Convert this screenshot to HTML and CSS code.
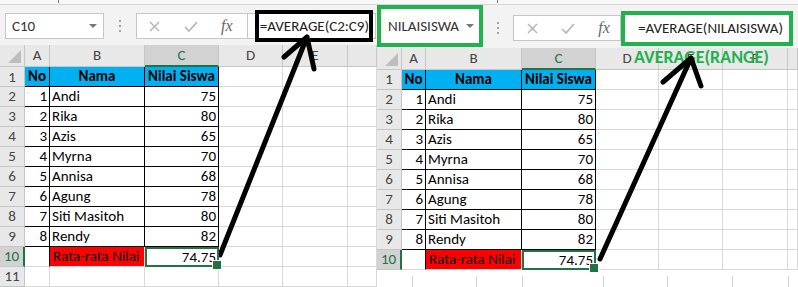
FILE: index.html
```html
<!DOCTYPE html>
<html lang="id">
<head>
    <meta charset="UTF-8">
    <title>AVERAGE - Excel</title>
    <link rel="stylesheet" href="styles.css">
</head>
<body>
<div class="screen">

    <!-- kiri: rumus dengan range biasa -->
    <section class="panel panel-l">
        <div class="ribbon"><i class="tick tick-l"></i></div>
        <div class="fbar">
            <div class="namebox">C10 <span class="caret"></span></div>
            <div class="sep"><i></i><i></i><i></i></div>
            <div class="fxbox">
                <span class="ico"><svg width="11" height="11" viewBox="0 0 11 11"><path d="M1 1L10 10M10 1L1 10" stroke="#b3b3b3" stroke-width="1.4"/></svg></span>
                <span class="ico"><svg width="14" height="11" viewBox="0 0 14 11"><path d="M1 6L5 10L13 1" stroke="#b3b3b3" stroke-width="1.6" fill="none"/></svg></span>
                <span class="ico fx">fx</span>
            </div>
            <div class="formula">
                <div class="hl-black">=AVERAGE(C2:C9)</div>
            </div>
        </div>
        <div class="sheet sheet-l">
            <div class="c hd corner"></div><div class="c hd">A</div><div class="c hd">B</div><div class="c hd sel-col">C</div><div class="c hd">D</div><div class="c hd">E</div><div class="c hd"></div>

            <div class="c hd">1</div><div class="c t blue">No</div><div class="c t blue">Nama</div><div class="c t blue">Nilai Siswa</div><div class="c"></div><div class="c"></div><div class="c"></div>
            <div class="c hd">2</div><div class="c t r">1</div><div class="c t">Andi</div><div class="c t r">75</div><div class="c"></div><div class="c"></div><div class="c"></div>
            <div class="c hd">3</div><div class="c t r">2</div><div class="c t">Rika</div><div class="c t r">80</div><div class="c"></div><div class="c"></div><div class="c"></div>
            <div class="c hd">4</div><div class="c t r">3</div><div class="c t">Azis</div><div class="c t r">65</div><div class="c"></div><div class="c"></div><div class="c"></div>
            <div class="c hd">5</div><div class="c t r">4</div><div class="c t">Myrna</div><div class="c t r">70</div><div class="c"></div><div class="c"></div><div class="c"></div>
            <div class="c hd">6</div><div class="c t r">5</div><div class="c t">Annisa</div><div class="c t r">68</div><div class="c"></div><div class="c"></div><div class="c"></div>
            <div class="c hd">7</div><div class="c t r">6</div><div class="c t">Agung</div><div class="c t r">78</div><div class="c"></div><div class="c"></div><div class="c"></div>
            <div class="c hd">8</div><div class="c t r">7</div><div class="c t">Siti Masitoh</div><div class="c t r">80</div><div class="c"></div><div class="c"></div><div class="c"></div>
            <div class="c hd">9</div><div class="c t r">8</div><div class="c t">Rendy</div><div class="c t r">82</div><div class="c"></div><div class="c"></div><div class="c"></div>
            <div class="c hd sel-row">10</div><div class="c lb"></div><div class="c red">Rata-rata Nilai</div><div class="c act">74.75</div><div class="c"></div><div class="c"></div><div class="c"></div>
            <div class="c hd">11</div><div class="c"></div><div class="c"></div><div class="c"></div><div class="c"></div><div class="c"></div><div class="c"></div>
        </div>
    </section>

    <!-- kanan: rumus dengan nama range -->
    <section class="panel panel-r">
        <div class="ribbon"><i class="tick tick-r"></i></div>
        <div class="fbar">
            <div class="namebox namebox-hl">NILAISISWA <span class="caret"></span></div>
            <div class="sep sep-r"><i></i><i></i><i></i></div>
            <div class="fxbox fxbox-r">
                <span class="ico"><svg width="11" height="11" viewBox="0 0 11 11"><path d="M1 1L10 10M10 1L1 10" stroke="#b3b3b3" stroke-width="1.4"/></svg></span>
                <span class="ico"><svg width="14" height="11" viewBox="0 0 14 11"><path d="M1 6L5 10L13 1" stroke="#b3b3b3" stroke-width="1.6" fill="none"/></svg></span>
                <span class="ico fx">fx</span>
            </div>
            <div class="formula-hl">=AVERAGE(NILAISISWA)</div>
        </div>
        <div class="sheet sheet-r">
            <div class="c hd corner"></div><div class="c hd">A</div><div class="c hd">B</div><div class="c hd sel-col">C</div><div class="c hd">D</div><div class="c hd">E</div><div class="c hd">F</div><div class="c hd"></div>

            <div class="c hd">1</div><div class="c t blue">No</div><div class="c t blue">Nama</div><div class="c t blue">Nilai Siswa</div><div class="c"></div><div class="c"></div><div class="c"></div><div class="c"></div>
            <div class="c hd">2</div><div class="c t r">1</div><div class="c t">Andi</div><div class="c t r">75</div><div class="c"></div><div class="c"></div><div class="c"></div><div class="c"></div>
            <div class="c hd">3</div><div class="c t r">2</div><div class="c t">Rika</div><div class="c t r">80</div><div class="c"></div><div class="c"></div><div class="c"></div><div class="c"></div>
            <div class="c hd">4</div><div class="c t r">3</div><div class="c t">Azis</div><div class="c t r">65</div><div class="c"></div><div class="c"></div><div class="c"></div><div class="c"></div>
            <div class="c hd">5</div><div class="c t r">4</div><div class="c t">Myrna</div><div class="c t r">70</div><div class="c"></div><div class="c"></div><div class="c"></div><div class="c"></div>
            <div class="c hd">6</div><div class="c t r">5</div><div class="c t">Annisa</div><div class="c t r">68</div><div class="c"></div><div class="c"></div><div class="c"></div><div class="c"></div>
            <div class="c hd">7</div><div class="c t r">6</div><div class="c t">Agung</div><div class="c t r">78</div><div class="c"></div><div class="c"></div><div class="c"></div><div class="c"></div>
            <div class="c hd">8</div><div class="c t r">7</div><div class="c t">Siti Masitoh</div><div class="c t r">80</div><div class="c"></div><div class="c"></div><div class="c"></div><div class="c"></div>
            <div class="c hd">9</div><div class="c t r">8</div><div class="c t">Rendy</div><div class="c t r">82</div><div class="c"></div><div class="c"></div><div class="c"></div><div class="c"></div>
            <div class="c hd sel-row">10</div><div class="c lb"></div><div class="c red">Rata-rata Nilai</div><div class="c act">74.75</div><div class="c"></div><div class="c"></div><div class="c"></div><div class="c"></div>
        </div>
        <div class="tail">
            <span class="w35"></span><span class="w64"></span><span class="w46"></span><span class="w81"></span><span class="w64"></span><span class="w65"></span><span class="w56"></span><span class="w10"></span>
        </div>
    </section>

    <div class="label">AVERAGE(RANGE)</div>

    <svg class="arrows" width="798" height="287" viewBox="0 0 798 287">
        <g stroke="#000" stroke-width="5" stroke-linecap="round" fill="none">
            <path d="M220 255L307 37M307 37L284 57M307 37L314 69"/>
            <path d="M600 259L691 58M691 58L663 82M691 58L701 86"/>
        </g>
    </svg>
</div>
</body>
</html>
```

FILE: styles.css
```css
* {
    box-sizing: border-box;
}

body {
    margin: 0;
    width: 798px;
    height: 287px;
    overflow: hidden;
    background: #fff;
    font-family: Carlito, Lato, "Liberation Sans", sans-serif;
}

.screen {
    position: relative;
    display: flex;
    height: 287px;
}

.panel {
    display: flex;
    flex-direction: column;
    overflow: hidden;
}

.panel-l {
    width: 377px;
}

.panel-r {
    width: 421px;
}

/* formula bar */

.ribbon {
    height: 5px;
    background: #f7f7f7;
    border-bottom: 1px solid #d6d6d6;
    display: flex;
}

.tick {
    width: 1px;
    height: 3px;
    background: #777;
}

.tick-l {
    margin-left: 58px;
}

.tick-r {
    margin-left: 120px;
}

.fbar {
    height: 43px;
    display: flex;
    align-items: center;
    padding-top: 3px;
    background: #f3f3f3;
}

.namebox {
    width: 100px;
    height: 26px;
    margin-left: 5px;
    background: #fff;
    border: 1px solid #c6c6c6;
    display: flex;
    align-items: center;
    justify-content: space-between;
    padding: 0 6px 0 6px;
    font-size: 15px;
    color: #333;
}

.namebox-hl {
    width: 106px;
    height: 42px;
    margin: -3px 0 0 0;
    align-self: flex-start;
    border: 4px solid #22b14c;
    padding: 0 5px 0 7px;
}

.caret {
    width: 0;
    height: 0;
    border-left: 4px solid transparent;
    border-right: 4px solid transparent;
    border-top: 4px solid #777;
}

.sep {
    width: 32px;
    display: flex;
    flex-direction: column;
    align-items: center;
    gap: 3px;
}

.sep-r {
    width: 30px;
}

.sep i {
    width: 2px;
    height: 2px;
    background: #a3a3a3;
}

.fxbox {
    width: 113px;
    height: 26px;
    background: #fff;
    border: 1px solid #c6c6c6;
    display: flex;
    align-items: center;
    gap: 16px;
    padding-left: 8px;
}

.fxbox-r {
    width: 108px;
}

.ico {
    width: 20px;
    display: flex;
    justify-content: center;
}

.fx {
    font-family: "Liberation Serif", serif;
    font-style: italic;
    font-size: 16px;
    color: #666;
}

.formula {
    flex: 1;
    height: 26px;
    margin-right: 1px;
    background: #fff;
    border: 1px solid #c6c6c6;
    border-left: none;
    display: flex;
}

.hl-black {
    flex: 1;
    margin: -4px 2px -4px 7px;
    border: 4px solid #000;
    background: #fff;
    display: flex;
    align-items: center;
    padding-left: 1px;
    font-size: 15px;
    color: #222;
    white-space: nowrap;
    overflow: hidden;
}

.formula-hl {
    width: 172px;
    height: 35px;
    border: 4px solid #22b14c;
    background: #fff;
    display: flex;
    align-items: center;
    padding-left: 13px;
    font-size: 15px;
    color: #222;
    white-space: nowrap;
    overflow: hidden;
}

/* sheet */

.sheet {
    display: grid;
}

.sheet-l {
    grid-template-columns: 25px 25px 95px 74px 64px 65px 29px;
    grid-template-rows: 22px repeat(11, 20px);
}

.sheet-r {
    grid-template-columns: 25px 24px 96px 74px 63px 64px 65px 10px;
    grid-template-rows: 22px repeat(10, 20px);
}

.c {
    border-right: 1px solid #d9d9d9;
    border-bottom: 1px solid #d9d9d9;
    font-size: 15px;
    line-height: 19px;
    padding: 0 2px;
    white-space: nowrap;
    overflow: hidden;
    color: #000;
}

.hd {
    background: #e8e8e8;
    border-color: #c6c6c6;
    text-align: center;
    color: #444;
    padding: 0;
}

.sheet > .hd:nth-child(-n+8) {
    line-height: 21px;
}

.corner {
    position: relative;
}

.corner::after {
    content: '';
    position: absolute;
    right: 3px;
    bottom: 3px;
    width: 0;
    height: 0;
    border-left: 13px solid transparent;
    border-bottom: 13px solid #bdbdbd;
}

.sheet > .sel-col {
    background: #d2d2d2;
    color: #217346;
    border-bottom: 2px solid #217346;
    line-height: 20px;
}

.sel-row {
    background: #d2d2d2;
    color: #217346;
    border-right: 2px solid #217346;
}

.t {
    border-color: #000;
}

.blue {
    background: #00b0f0;
    font-weight: bold;
    text-align: center;
}

.r {
    text-align: right;
}

.lb {
    border-right-color: #000;
}

.red {
    background: #f00;
    padding-left: 3px;
}

.act {
    position: relative;
    z-index: 1;
    overflow: visible;
    border: 2px solid #217346;
    line-height: 16px;
    text-align: right;
    padding-right: 1px;
}

.act::after {
    content: '';
    position: absolute;
    right: -5px;
    bottom: -5px;
    width: 8px;
    height: 8px;
    background: #217346;
    border: 1px solid #fff;
}

.tail {
    flex: 1;
    display: flex;
    padding-top: 6px;
}

.tail span {
    border-left: 1px solid #d4d4d4;
}

.tail span:first-child {
    border-left: none;
}

.w35 { width: 35px; }
.w64 { width: 64px; }
.w46 { width: 46px; }
.w81 { width: 81px; }
.w65 { width: 65px; }
.w56 { width: 56px; }
.w10 { width: 10px; }

/* overlay */

.label {
    position: absolute;
    left: 634px;
    top: 46px;
    font-size: 18px;
    font-weight: bold;
    color: #22b14c;
    white-space: nowrap;
}

.arrows {
    position: absolute;
    left: 0;
    top: 0;
    pointer-events: none;
}
```
